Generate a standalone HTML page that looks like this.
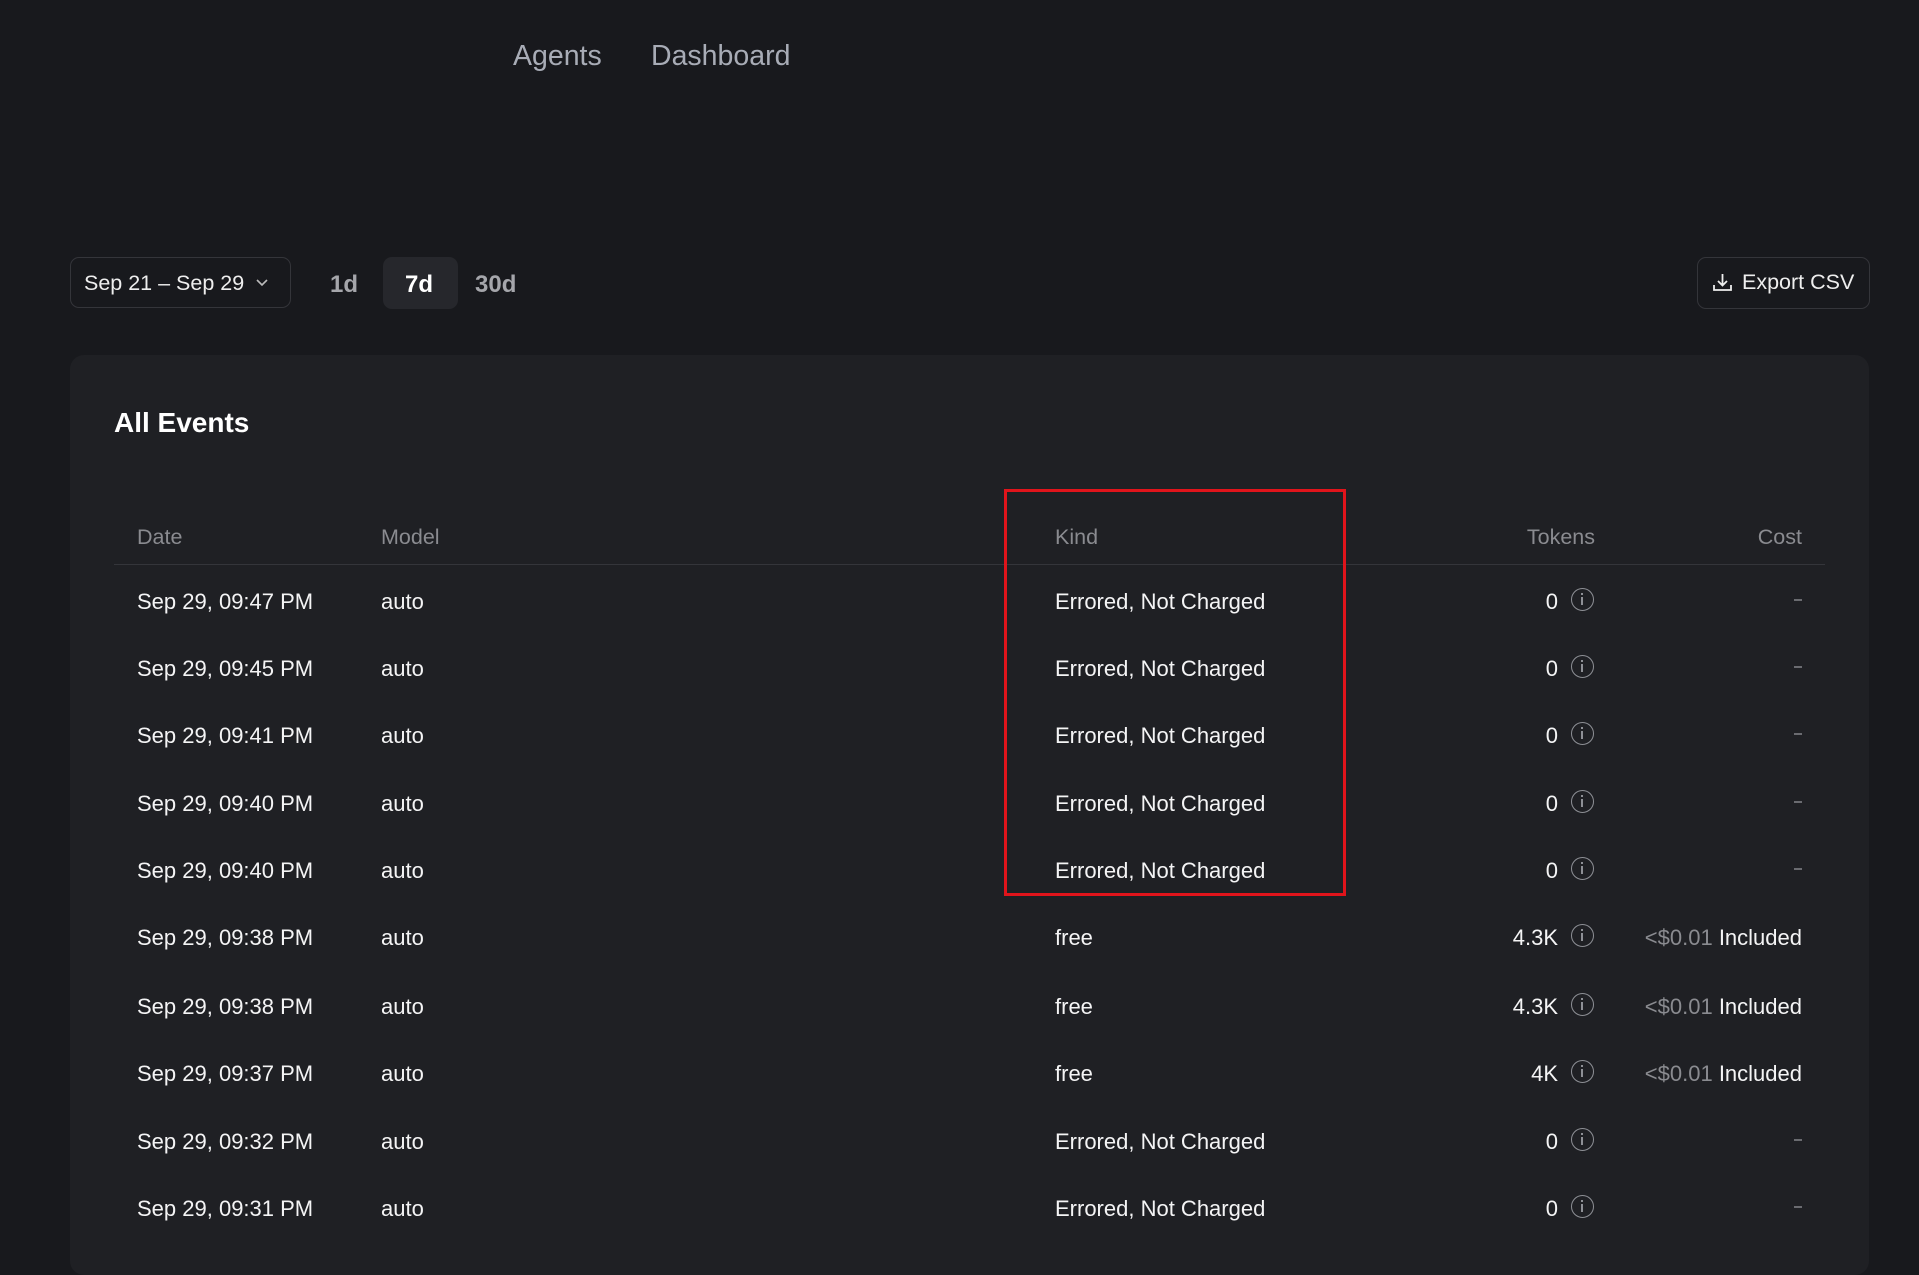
<!DOCTYPE html>
<html><head><meta charset="utf-8"><style>
*{margin:0;padding:0;box-sizing:border-box}
body{width:1919px;height:1254px;background:#18191d;font-family:"Liberation Sans",sans-serif;color:#f2f2f3;position:relative;overflow:hidden}
.a{position:absolute;white-space:nowrap}
.nav{font-size:28.5px;color:#a8acb6;top:40px}
.card{position:absolute;left:70px;top:355px;width:1799px;height:920px;background:#1f2024;border-radius:14px}
.hd{font-size:21.5px;color:#8a8b90;top:525px}
.r{font-size:22px;color:#f4f4f5}
.ic{position:absolute;width:23px;height:23px;border:1.6px solid #8e9096;border-radius:50%}
.ic:before{content:"";position:absolute;left:9.2px;top:4px;width:2px;height:2px;background:#8e9096}
.ic:after{content:"";position:absolute;left:9.2px;top:8px;width:2px;height:8px;background:#8e9096}
</style></head><body>
<div class="a nav" style="left:513px">Agents</div>
<div class="a nav" style="left:651px">Dashboard</div>

<div class="a" style="left:70px;top:257px;width:221px;height:51px;border:1px solid #34353a;border-radius:9px"></div>
<div class="a" style="left:84px;top:271px;font-size:21.5px;color:#eee">Sep 21 – Sep 29</div>
<svg class="a" style="left:255px;top:278px" width="14" height="10" viewBox="0 0 14 10"><path d="M2 2l5 5 5-5" stroke="#bbb" stroke-width="1.6" fill="none"/></svg>
<div class="a" style="left:330px;top:271px;font-size:24px;font-weight:bold;color:#a5a6ab">1d</div>
<div class="a" style="left:383px;top:257px;width:75px;height:52px;background:#26272c;border-radius:9px"></div>
<div class="a" style="left:405px;top:271px;font-size:24px;font-weight:bold;color:#fff">7d</div>
<div class="a" style="left:475px;top:271px;font-size:24px;font-weight:bold;color:#a5a6ab">30d</div>

<div class="a" style="left:1697px;top:257px;width:173px;height:52px;border:1px solid #34353a;border-radius:9px"></div>
<svg class="a" style="left:1712px;top:272px" width="21" height="20" viewBox="0 0 21 20"><path d="M10.5 2v11M6 9l4.5 4.5L15 9M2 13v5h17v-5" stroke="#eee" stroke-width="1.8" fill="none"/></svg>
<div class="a" style="left:1742px;top:270px;font-size:21.5px;color:#eee">Export CSV</div>

<div class="card"></div>
<div class="a" style="left:114px;top:407px;font-size:28px;font-weight:bold;color:#fff">All Events</div>

<div class="a hd" style="left:137px">Date</div>
<div class="a hd" style="left:381px">Model</div>
<div class="a hd" style="left:1055px">Kind</div>
<div class="a hd" style="right:324px">Tokens</div>
<div class="a hd" style="right:117px">Cost</div>
<div class="a" style="left:114px;top:564px;width:1711px;height:1px;background:#34353a"></div>

<div id="rows"></div>
<script>
var rows=[["09:47","Errored, Not Charged","0",0],["09:45","Errored, Not Charged","0",0],["09:41","Errored, Not Charged","0",0],["09:40","Errored, Not Charged","0",0],["09:40","Errored, Not Charged","0",0],["09:38","free","4.3K",1],["09:38","free","4.3K",1],["09:37","free","4K",1],["09:32","Errored, Not Charged","0",0],["09:31","Errored, Not Charged","0",0]];
var ys=[600,667,734,802,869,936,1005,1072,1140,1207],h="";
rows.forEach(function(r,i){var t=ys[i]-11;
h+='<div class="a r" style="left:137px;top:'+t+'px">Sep 29, '+r[0]+' PM</div>';
h+='<div class="a r" style="left:381px;top:'+t+'px">auto</div>';
h+='<div class="a r" style="left:1055px;top:'+t+'px">'+r[1]+'</div>';
h+='<div class="a r" style="right:361px;top:'+t+'px">'+r[2]+'</div>';
h+='<div class="ic" style="left:1571px;top:'+(ys[i]-12)+'px"></div>';
if(r[3])h+='<div class="a r" style="right:117px;top:'+t+'px"><span style="color:#8a8b90">&lt;$0.01</span> Included</div>';
else h+='<div class="a" style="right:117px;top:'+(ys[i]-1)+'px;width:8px;height:1.5px;background:#6a6b70"></div>';
});
document.getElementById("rows").innerHTML=h;
</script>
<div class="a" style="left:1004px;top:489px;width:342px;height:407px;border:3px solid #e0141b"></div>
</body></html>
